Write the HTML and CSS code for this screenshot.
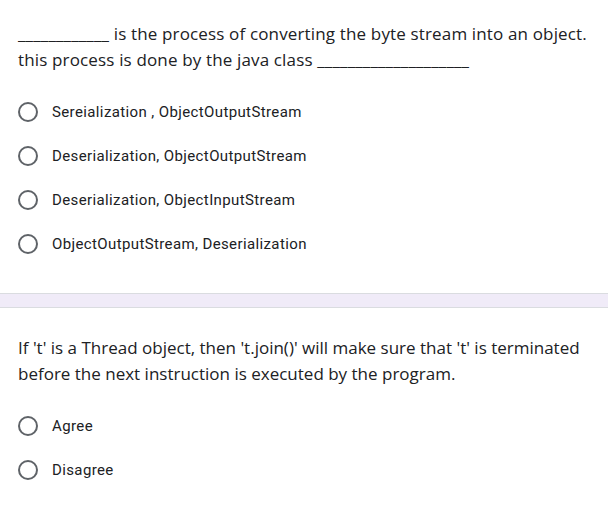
FILE: index.html
```html
<!DOCTYPE html>
<html lang="en">
<head>
<meta charset="utf-8">
<title>Quiz</title>
<link rel="stylesheet" href="styles.css">
</head>
<body>
<section class="card card-first">
  <div class="title title-first"><span class="blank">____________</span> <span class="seg">is the process of converting the byte stream into an object.</span> <span class="seg">this process is done by the java class</span> <span class="blank">____________________</span></div>
  <div class="options">
    <label class="option"><span class="radio"></span><span class="label">Sereialization , ObjectOutputStream</span></label>
    <label class="option"><span class="radio"></span><span class="label">Deserialization, ObjectOutputStream</span></label>
    <label class="option"><span class="radio"></span><span class="label">Deserialization, ObjectInputStream</span></label>
    <label class="option"><span class="radio"></span><span class="label">ObjectOutputStream, Deserialization</span></label>
  </div>
</section>
<div class="separator"></div>
<section class="card card-second">
  <div class="title">If 't' is a Thread object, then 't.join()' will make sure that 't' is terminated before the next instruction is executed by the program.</div>
  <div class="options">
    <label class="option"><span class="radio"></span><span class="label">Agree</span></label>
    <label class="option"><span class="radio"></span><span class="label">Disagree</span></label>
  </div>
</section>
</body>
</html>
```
FILE: styles.css
```css
html, body {
  margin: 0;
  padding: 0;
  background: #ffffff;
}
body {
  width: 608px;
  color: #202124;
}
.card {
  padding: 0 18px;
}
.card-first {
  padding-top: 21px;
  padding-bottom: 27px;
}
.card-second {
  padding-top: 27px;
  padding-bottom: 20px;
}
.title {
  font-family: "Open Sans", "Liberation Sans", sans-serif;
  font-size: 17px;
  line-height: 26px;
  color: #202124;
  width: 572px;
}
.title-first {
  letter-spacing: 0.15px;
}
.seg {
  white-space: nowrap;
}
.options {
  margin-top: 17px;
  display: flex;
  flex-direction: column;
}
.option {
  display: flex;
  align-items: center;
  height: 44px;
  font-family: Roboto, "Liberation Sans", sans-serif;
  font-size: 15px;
  letter-spacing: 0.38px;
  color: #202124;
}
.radio {
  box-sizing: border-box;
  width: 20px;
  height: 20px;
  border: 2px solid #5f6368;
  border-radius: 50%;
  margin-right: 14px;
  flex: none;
}
.separator {
  height: 13px;
  background: #f0ebf8;
  border-top: 1px solid #dadce0;
  border-bottom: 1px solid #dadce0;
}
```
